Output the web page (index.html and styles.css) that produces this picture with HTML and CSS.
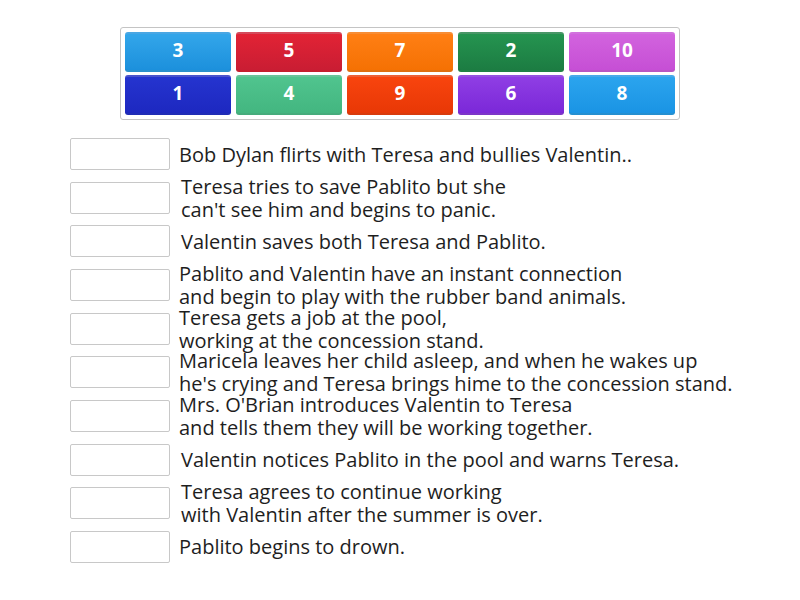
FILE: index.html
```html
<!DOCTYPE html>
<html>
<head>
<meta charset="utf-8">
<link rel="stylesheet" href="styles.css">
</head>
<body>
<div class="bank">
  <div class="tile c-blue">3</div>
  <div class="tile c-red">5</div>
  <div class="tile c-orange">7</div>
  <div class="tile c-green">2</div>
  <div class="tile c-pink">10</div>
  <div class="tile c-navy">1</div>
  <div class="tile c-mint">4</div>
  <div class="tile c-vermilion">9</div>
  <div class="tile c-purple">6</div>
  <div class="tile c-sky">8</div>
</div>
<div class="list">
  <div class="row"><div class="slot"></div><div class="text">Bob Dylan flirts with Teresa and bullies Valentin..</div></div>
  <div class="row"><div class="slot"></div><div class="text indent">Teresa tries to save Pablito but she<br>can't see him and begins to panic.</div></div>
  <div class="row"><div class="slot"></div><div class="text indent">Valentin saves both Teresa and Pablito.</div></div>
  <div class="row"><div class="slot"></div><div class="text">Pablito and Valentin have an instant connection<br>and begin to play with the rubber band animals.</div></div>
  <div class="row"><div class="slot"></div><div class="text">Teresa gets a job at the pool,<br>working at the concession stand.</div></div>
  <div class="row"><div class="slot"></div><div class="text">Maricela leaves her child asleep, and when he wakes up<br>he's crying and Teresa brings hime to the concession stand.</div></div>
  <div class="row"><div class="slot"></div><div class="text">Mrs. O'Brian introduces Valentin to Teresa<br>and tells them they will be working together.</div></div>
  <div class="row"><div class="slot"></div><div class="text indent">Valentin notices Pablito in the pool and warns Teresa.</div></div>
  <div class="row"><div class="slot"></div><div class="text indent">Teresa agrees to continue working<br>with Valentin after the summer is over.</div></div>
  <div class="row"><div class="slot"></div><div class="text">Pablito begins to drown.</div></div>
</div>
</body>
</html>
```
FILE: styles.css
```css
html, body {
  margin: 0;
  padding: 0;
  background: #ffffff;
}
body {
  font-family: "Open Sans", "Liberation Sans", sans-serif;
  width: 800px;
  height: 600px;
  overflow: hidden;
}
.bank {
  margin: 27px auto 0;
  width: 550px;
  padding: 4px;
  border: 1px solid #c4c4c4;
  border-radius: 3px;
  display: grid;
  grid-template-columns: repeat(5, 106px);
  grid-auto-rows: 40px;
  column-gap: 5px;
  row-gap: 3px;
}
.tile {
  border-radius: 3px;
  color: #ffffff;
  font-weight: 700;
  font-size: 19px;
  display: flex;
  align-items: center;
  justify-content: center;
  box-sizing: border-box;
  padding-bottom: 4px;
  border-top: 2px solid rgba(255,255,255,0.2);
  border-bottom: 2px solid rgba(0,0,0,0.12);
}
.c-blue { background: linear-gradient(#33a6ea, #1c90dc); }
.c-red { background: linear-gradient(#e22335, #c91d33); }
.c-orange { background: linear-gradient(#ff7f14, #f57103); }
.c-green { background: linear-gradient(#259450, #1c7c42); }
.c-pink { background: linear-gradient(#d263de, #c64fd5); }
.c-navy { background: linear-gradient(#2534cf, #1d28c0); }
.c-mint { background: linear-gradient(#50c48e, #43b680); }
.c-vermilion { background: linear-gradient(#f8440e, #e83806); }
.c-purple { background: linear-gradient(#8f3ee4, #7b28d8); }
.c-sky { background: linear-gradient(#2ba4ee, #1a94e4); }

.list {
  margin: 18px 0 0 70px;
  display: flex;
  flex-direction: column;
  row-gap: 11.67px;
}
.row {
  display: flex;
  align-items: center;
  height: 32px;
}
.slot {
  width: 100px;
  height: 32px;
  box-sizing: border-box;
  border: 1px solid #c8c8c8;
  border-radius: 2px;
  flex: none;
}
.text {
  margin-left: 9px;
  font-size: 20px;
  line-height: 23px;
  color: #1e1e1e;
  white-space: nowrap;
}
.text.indent {
  margin-left: 11px;
}
```
